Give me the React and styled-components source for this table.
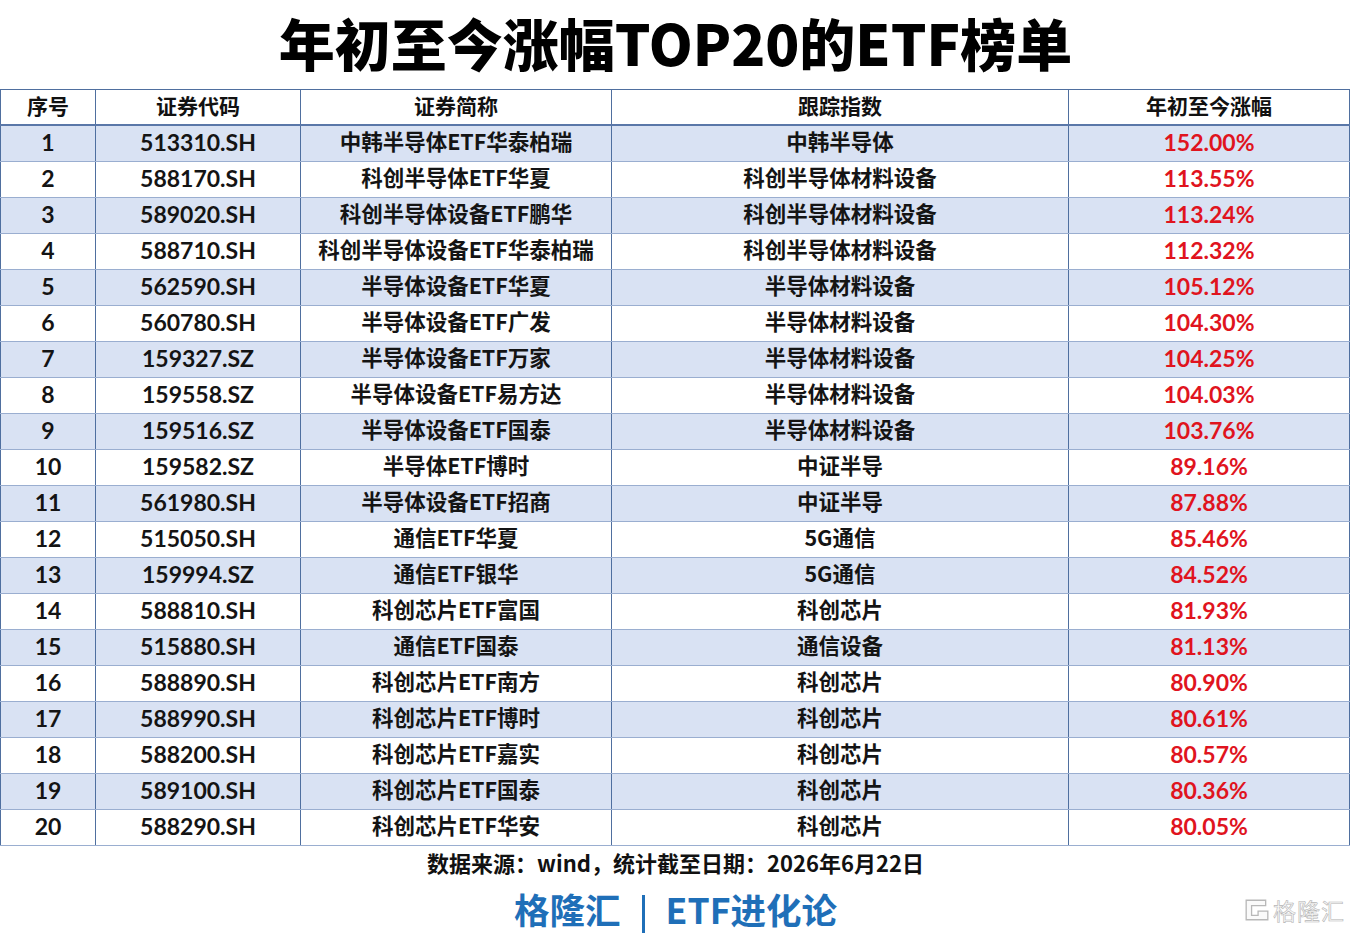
import styled, { createGlobalStyle } from "styled-components";

const rows = [
  ["1", "513310.SH", "中韩半导体ETF华泰柏瑞", "中韩半导体", "152.00%"],
  ["2", "588170.SH", "科创半导体ETF华夏", "科创半导体材料设备", "113.55%"],
  ["3", "589020.SH", "科创半导体设备ETF鹏华", "科创半导体材料设备", "113.24%"],
  ["4", "588710.SH", "科创半导体设备ETF华泰柏瑞", "科创半导体材料设备", "112.32%"],
  ["5", "562590.SH", "半导体设备ETF华夏", "半导体材料设备", "105.12%"],
  ["6", "560780.SH", "半导体设备ETF广发", "半导体材料设备", "104.30%"],
  ["7", "159327.SZ", "半导体设备ETF万家", "半导体材料设备", "104.25%"],
  ["8", "159558.SZ", "半导体设备ETF易方达", "半导体材料设备", "104.03%"],
  ["9", "159516.SZ", "半导体设备ETF国泰", "半导体材料设备", "103.76%"],
  ["10", "159582.SZ", "半导体ETF博时", "中证半导", "89.16%"],
  ["11", "561980.SH", "半导体设备ETF招商", "中证半导", "87.88%"],
  ["12", "515050.SH", "通信ETF华夏", "5G通信", "85.46%"],
  ["13", "159994.SZ", "通信ETF银华", "5G通信", "84.52%"],
  ["14", "588810.SH", "科创芯片ETF富国", "科创芯片", "81.93%"],
  ["15", "515880.SH", "通信ETF国泰", "通信设备", "81.13%"],
  ["16", "588890.SH", "科创芯片ETF南方", "科创芯片", "80.90%"],
  ["17", "588990.SH", "科创芯片ETF博时", "科创芯片", "80.61%"],
  ["18", "588200.SH", "科创芯片ETF嘉实", "科创芯片", "80.57%"],
  ["19", "589100.SH", "科创芯片ETF国泰", "科创芯片", "80.36%"],
  ["20", "588290.SH", "科创芯片ETF华安", "科创芯片", "80.05%"],
];

const headers = ["序号", "证券代码", "证券简称", "跟踪指数", "年初至今涨幅"];
const widths = [95, 205, 311, 457, 281];

export default function App() {
  return (
    <Page>
      <GlobalStyle />
      <Title>年初至今涨幅TOP20的ETF榜单</Title>
      <Table>
        <colgroup>
          {widths.map((w, i) => <col key={i} style={{ width: w }} />)}
        </colgroup>
        <thead>
          <tr>
            {headers.map((h) => <Th key={h}>{h}</Th>)}
          </tr>
        </thead>
        <tbody>
          {rows.map((r, i) => (
            <Row key={r[0]} $shaded={i % 2 === 0}>
              <Td $num>{r[0]}</Td>
              <Td $num>{r[1]}</Td>
              <Td>{r[2]}</Td>
              <Td>{r[3]}</Td>
              <Td $num $red>{r[4]}</Td>
            </Row>
          ))}
        </tbody>
      </Table>
      <Source>数据来源：wind，统计截至日期：2026年6月22日</Source>
      <Brand>
        格隆汇<Bar />ETF进化论
      </Brand>
      <Watermark>
        <svg width="26" height="24" viewBox="0 0 24 22">
          <path
            d="M2 2 H20 V7 H7 V16 H13 V12 H22 V20 H2 Z"
            fill="#fafafa"
            stroke="#b8b8b8"
            strokeWidth="1.2"
          />
        </svg>
        <span>格隆汇</span>
      </Watermark>
    </Page>
  );
}

const GlobalStyle = createGlobalStyle`
  body {
    margin: 0;
    background: #fff;
    font-family: "Noto Sans CJK SC", sans-serif;
  }
`;

const Page = styled.div`
  width: 1351px;
  height: 941px;
  position: relative;
  background: #fff;
  overflow: hidden;
`;

const Title = styled.h1`
  margin: 0;
  height: 89px;
  display: flex;
  align-items: center;
  justify-content: center;
  font-family: "Noto Sans CJK SC", sans-serif;
  font-size: 56px;
  font-weight: 900;
  color: #000;
  padding-bottom: 7px;
  box-sizing: border-box;
`;

const Table = styled.table`
  width: 1350px;
  border-collapse: collapse;
  table-layout: fixed;
  border: 1px solid #4f6f9f;
`;

const Th = styled.th`
  height: 35px;
  padding: 0 0 3px;
  box-sizing: border-box;
  font-family: "Noto Sans CJK SC", sans-serif;
  font-size: 21px;
  font-weight: 700;
  color: #111;
  background: #fff;
  border-left: 1px solid #4f6f9f;
  border-bottom: 2px solid #5a77a8;
  text-align: center;
  line-height: 30px;
`;

const Row = styled.tr`
  background: ${(p) => (p.$shaded ? "#d9e2f3" : "#fff")};
`;

const Td = styled.td`
  height: 35px;
  padding: 0 0 ${(p) => (p.$num ? "3px" : "5px")};
  box-sizing: border-box;
  text-align: center;
  line-height: 30px;
  font-family: ${(p) =>
    p.$num ? 'Lato, "Noto Sans CJK SC", sans-serif' : '"Noto Sans CJK SC", sans-serif'};
  font-size: ${(p) => (p.$num ? "23px" : "21.5px")};
  font-weight: 700;
  color: ${(p) => (p.$red ? "#e0141e" : "#141414")};
  border-left: 1px solid #4f6f9f;
  border-bottom: 1px solid #9aaed0;
  white-space: nowrap;
`;

const Source = styled.div`
  margin-top: 1px;
  text-align: center;
  font-family: "Noto Sans CJK SC", sans-serif;
  font-size: 22px;
  font-weight: 700;
  color: #111;
  line-height: 30px;
`;

const Brand = styled.div`
  margin-top: 8px;
  display: flex;
  align-items: center;
  justify-content: center;
  font-family: "Noto Sans CJK SC", sans-serif;
  font-size: 35.5px;
  font-weight: 700;
  color: #1f6fb8;
  line-height: 42px;
`;

const Bar = styled.span`
  display: inline-block;
  width: 3px;
  height: 38px;
  margin: 10px 21px 0;
  background: #1f6fb8;
`;

const Watermark = styled.div`
  position: absolute;
  right: 6px;
  bottom: 14px;
  display: flex;
  align-items: center;
  gap: 3px;
  span {
    font-family: "Noto Sans CJK SC", sans-serif;
    font-size: 23px;
    font-weight: 400;
    color: #fafafa;
    -webkit-text-stroke: 0.6px #b5b5b5;
    letter-spacing: 1px;
  }
`;
